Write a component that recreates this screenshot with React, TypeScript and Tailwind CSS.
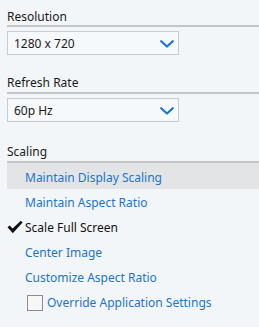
import React from "react";

function Chevron() {
  return (
    <svg width="14" height="8" viewBox="0 0 14 8" className="absolute right-[4px] top-[8px]">
      <path d="M1.2 1.2 L7 6.5 L12.8 1.2" fill="none" stroke="#1b74cf" strokeWidth="2.2" strokeLinecap="round" strokeLinejoin="round" />
    </svg>
  );
}

function Select({ value }: { value: string }) {
  return (
    <div className="relative mt-[4px] h-[24px] w-[172px] border border-[#c9cccf] bg-[#f6f9fb] pl-[6px] pt-[1px] leading-[22px] text-[#1a1a1a]">
      {value}
      <Chevron />
    </div>
  );
}

function Label({ text, className }: { text: string; className: string }) {
  return (
    <div className={"border-b-2 border-[#c3c6c8] leading-[16px] text-[#1a1a1a] " + className}>{text}</div>
  );
}

export default function App() {
  const link = "text-[#1b74cf]";
  return (
    <div
      className="h-[327px] w-[259px] overflow-hidden bg-[#f3f6f8] pl-[7px] text-[12px]"
      style={{ fontFamily: '"Noto Sans", "Open Sans", sans-serif' }}
    >
      <Label text="Resolution" className="pt-[9px]" />
      <Select value="1280 x 720" />
      <Label text="Refresh Rate" className="mt-[20px] pb-[1px]" />
      <Select value="60p Hz" />
      <Label text="Scaling" className="mt-[22px] pb-[1px]" />
      <div className={"flex h-[26px] items-center bg-[#e3e4e5] pl-[18px] pt-[3px] " + link}>Maintain Display Scaling</div>
      <div className={"flex h-[25px] items-center pl-[18px] pt-[3px] " + link}>Maintain Aspect Ratio</div>
      <div className="flex h-[25px] items-center pt-[3px] text-[#111]">
        <svg width="16" height="14" viewBox="0 0 16 14" className="mr-[2px] shrink-0 -translate-y-[1px]">
          <path d="M0.5 7.2 L2.6 5.4 L5.6 8.6 L13.8 0.8 L15.6 2.4 L5.8 13.2 Z" fill="#111" />
        </svg>
        Scale Full Screen
      </div>
      <div className={"flex h-[25px] items-center pl-[18px] pt-[3px] " + link}>Center Image</div>
      <div className={"flex h-[25px] items-center pl-[18px] pt-[3px] " + link}>Customize Aspect Ratio</div>
      <div className={"flex h-[25px] items-center pl-[20px] pt-[3px] " + link}>
        <div className="mr-[4px] h-[16px] w-[16px] border border-[#8c8c8c] bg-[#f7f7f7]" />
        Override Application Settings
      </div>
    </div>
  );
}
